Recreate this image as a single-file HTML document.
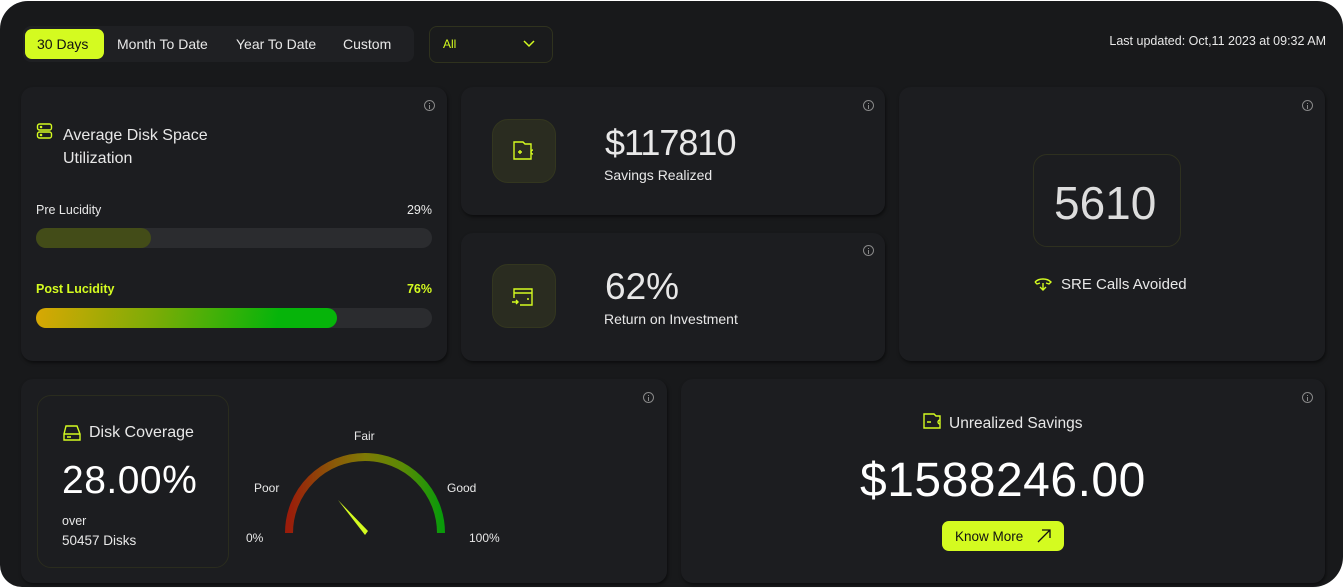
<!DOCTYPE html>
<html><head><meta charset="utf-8"><style>
*{box-sizing:border-box;margin:0;padding:0}
body{width:1344px;height:588px;background:#fff;font-family:"Liberation Sans",sans-serif;overflow:hidden;position:relative}
.frame{position:absolute;left:0;top:1px;width:1343px;height:586px;background:#18191b;border-radius:28px 26px 30px 22px}
.card{position:absolute;background:#1c1d20;border-radius:12px;box-shadow:1px 2px 3px rgba(0,0,0,.5)}
.t{position:absolute;color:#e8e8e8;white-space:nowrap}
.info{position:absolute;width:11px;height:11px;border:1px solid #888;border-radius:50%}
.info:after{content:"";position:absolute;left:4px;top:4px;width:1px;height:4px;background:#888}
.info:before{content:"";position:absolute;left:4px;top:2px;width:1px;height:1px;background:#888}
.ibox{position:absolute;width:64px;height:64px;border-radius:16px;background:#2a2c20;border:1px solid #33361f}
</style></head><body>
<div class="frame"></div>
<div style="position:absolute;left:23px;top:26px;width:391px;height:36px;background:#1f2023;border-radius:8px"></div>
<div style="position:absolute;left:25px;top:29px;width:79px;height:30px;background:#d4fb20;border-radius:7px"></div>
<div class="t" style="left:37px;top:36px;font-size:14px;color:#111">30 Days</div>
<div class="t" style="left:117px;top:36px;font-size:14px">Month To Date</div>
<div class="t" style="left:236px;top:36px;font-size:14px">Year To Date</div>
<div class="t" style="left:343px;top:36px;font-size:14px">Custom</div>
<div style="position:absolute;left:429px;top:26px;width:124px;height:37px;border:1px solid #2f321e;border-radius:8px;background:#1a1b1c"></div>
<div class="t" style="left:443px;top:37px;font-size:12px;color:#d4fb20">All</div>
<svg style="position:absolute;left:522px;top:39px" width="14" height="10"><path d="M2 2l5 5 5-5" stroke="#d4fb20" stroke-width="1.5" fill="none"/></svg>
<div class="t" style="right:18px;top:34px;font-size:12.5px">Last updated: Oct,11 2023 at 09:32 AM</div>

<div class="card" style="left:21px;top:87px;width:426px;height:274px"></div>
<div class="info" style="left:424px;top:100px"></div>
<svg style="position:absolute;left:36px;top:123px" width="18" height="18" fill="none" stroke="#d4fb20" stroke-width="1.4"><rect x="1.5" y="1" width="14" height="6" rx="2"/><rect x="1.5" y="9" width="14" height="6" rx="2"/><circle cx="5" cy="4" r=".6"/><circle cx="5" cy="12" r=".6"/></svg>
<div class="t" style="left:63px;top:124px;font-size:16px;line-height:23px">Average Disk Space<br>Utilization</div>
<div class="t" style="left:36px;top:203px;font-size:12.5px">Pre Lucidity</div>
<div class="t" style="right:912px;top:203px;font-size:12.5px">29%</div>
<div style="position:absolute;left:36px;top:228px;width:396px;height:20px;background:#2b2c2f;border-radius:10px"></div>
<div style="position:absolute;left:36px;top:228px;width:115px;height:20px;background:#434c18;border-radius:10px"></div>
<div class="t" style="left:36px;top:282px;font-size:12.5px;color:#d4fb20;font-weight:bold">Post Lucidity</div>
<div class="t" style="right:912px;top:282px;font-size:12.5px;color:#d4fb20;font-weight:bold">76%</div>
<div style="position:absolute;left:36px;top:308px;width:396px;height:20px;background:#2b2c2f;border-radius:10px"></div>
<div style="position:absolute;left:36px;top:308px;width:301px;height:20px;background:linear-gradient(100deg,#d8a804,#7aac06 40%,#06b40a 80%);border-radius:10px"></div>

<div class="card" style="left:461px;top:87px;width:424px;height:128px"></div>
<div class="info" style="left:863px;top:100px"></div>
<div class="ibox" style="left:492px;top:119px"></div>
<svg style="position:absolute;left:512px;top:139px" width="24" height="24" viewBox="0 0 24 24" fill="none" stroke="#d4fb20" stroke-width="1.4"><path d="M2 3h9l2 2h6v15H2z"/><path d="M6 13h4M8 11v4"/><path d="M21 11a2 2 0 0 0 0 4"/></svg>
<div class="t" style="left:605px;top:122px;font-size:36px;letter-spacing:-1px">$117810</div>
<div class="t" style="left:604px;top:167px;font-size:14px">Savings Realized</div>
<div class="card" style="left:461px;top:233px;width:424px;height:128px"></div>
<div class="info" style="left:863px;top:245px"></div>
<div class="ibox" style="left:492px;top:264px"></div>
<svg style="position:absolute;left:511px;top:285px" width="24" height="24" viewBox="0 0 24 24" fill="none" stroke="#d4fb20" stroke-width="1.4"><path d="M3 13V4h18v16H9"/><path d="M3 8h18M16 14h2"/><path d="M1 17h6M5 15l2 2-2 2"/></svg>
<div class="t" style="left:605px;top:266px;font-size:37px">62%</div>
<div class="t" style="left:604px;top:311px;font-size:14px">Return on Investment</div>

<div class="card" style="left:899px;top:87px;width:426px;height:274px"></div>
<div class="info" style="left:1302px;top:100px"></div>
<div style="position:absolute;left:1033px;top:154px;width:148px;height:93px;border:1px solid #2e301f;border-radius:14px"></div>
<div class="t" style="left:1054px;top:176px;font-size:46px;color:#ddd">5610</div>
<svg style="position:absolute;left:1033px;top:276px" width="20" height="16" fill="none" stroke="#d4fb20" stroke-width="1.4"><path d="M2 6c4-4 12-4 16 0l-2 2-3-1M2 6l2 2 3-1M10 7v7M7 11l3 3 3-3"/></svg>
<div class="t" style="left:1061px;top:276px;font-size:15px">SRE Calls Avoided</div>

<div class="card" style="left:21px;top:379px;width:646px;height:204px"></div>
<div class="info" style="left:643px;top:392px"></div>
<div style="position:absolute;left:37px;top:395px;width:192px;height:173px;border:1px solid #2a2c1e;border-radius:14px"></div>
<svg style="position:absolute;left:62px;top:424px" width="20" height="18" fill="none" stroke="#d4fb20" stroke-width="1.4"><path d="M4 2h11l3 8v6H2v-6z"/><path d="M2 10h16M5 13h4"/></svg>
<div class="t" style="left:89px;top:424px;font-size:16px">Disk Coverage</div>
<div class="t" style="left:62px;top:459px;font-size:39px;color:#fff;letter-spacing:0.5px">28.00%</div>
<div class="t" style="left:62px;top:514px;font-size:12.5px">over</div>
<div class="t" style="left:62px;top:533px;font-size:13.5px">50457 Disks</div>
<svg style="position:absolute;left:230px;top:400px" width="300" height="160">
<defs><linearGradient id="g" x1="0" x2="1" y1="0" y2="0"><stop offset="0" stop-color="#9a1c0a"/><stop offset=".3" stop-color="#8a5a08"/><stop offset=".5" stop-color="#7f7a05"/><stop offset=".75" stop-color="#5a8a05"/><stop offset="1" stop-color="#0a9a0a"/></linearGradient></defs>
<path d="M59 133A76 76 0 0 1 211 133" stroke="url(#g)" stroke-width="8" fill="none"/>
<path d="M108 100L138 131L135 135Z" fill="#d4fb20"/>
<text x="124" y="40" fill="#e8e8e8" font-size="12" font-family="Liberation Sans">Fair</text>
<text x="24" y="92" fill="#e8e8e8" font-size="12" font-family="Liberation Sans">Poor</text>
<text x="217" y="92" fill="#e8e8e8" font-size="12" font-family="Liberation Sans">Good</text>
<text x="16" y="142" fill="#e8e8e8" font-size="12" font-family="Liberation Sans">0%</text>
<text x="239" y="142" fill="#e8e8e8" font-size="12" font-family="Liberation Sans">100%</text>
</svg>

<div class="card" style="left:681px;top:379px;width:644px;height:204px"></div>
<div class="info" style="left:1302px;top:392px"></div>
<svg style="position:absolute;left:922px;top:412px" width="20" height="18" fill="none" stroke="#d4fb20" stroke-width="1.4"><path d="M2 2h10l2 2h4v12H2z"/><path d="M5 10h4M18 8a2 2 0 0 0 0 4"/></svg>
<div class="t" style="left:949px;top:415px;font-size:15.5px">Unrealized Savings</div>
<div class="t" style="left:860px;top:453px;font-size:48px;color:#fff;letter-spacing:0.5px">$1588246.00</div>
<div style="position:absolute;left:942px;top:521px;width:122px;height:30px;background:#d4fb20;border-radius:7px"></div>
<div class="t" style="left:955px;top:529px;font-size:13.5px;color:#111">Know More</div>
<svg style="position:absolute;left:1036px;top:528px" width="16" height="16" fill="none" stroke="#111" stroke-width="1.3"><path d="M2 14L14 2M6 2h8v8"/></svg>
</body></html>
